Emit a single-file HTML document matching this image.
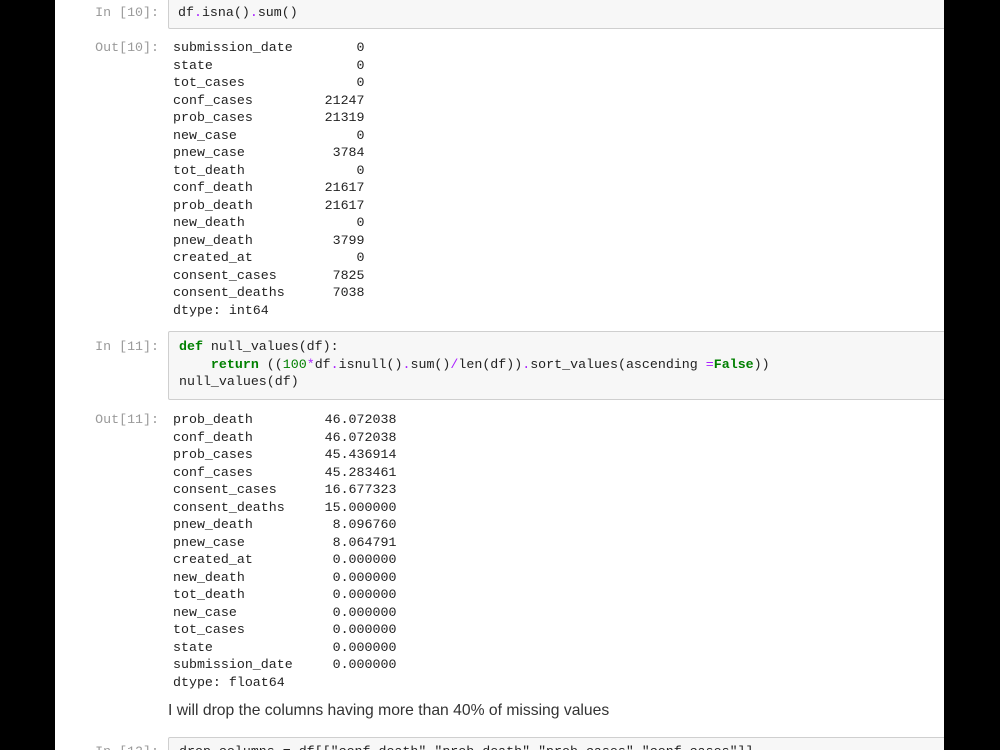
<!DOCTYPE html>
<html><head><meta charset="utf-8"><style>
html,body{margin:0;width:1000px;height:750px;overflow:hidden;}
body{background:#000;position:relative;font-family:"Liberation Mono",monospace;font-size:13.3px;}
.page{position:absolute;left:55px;top:0;width:889px;height:750px;background:#fff;overflow:hidden;}
.p{position:absolute;right:785px;color:#9a9a9a;white-space:pre;line-height:17.5px;}
.box{position:absolute;left:113px;width:790px;background:#f7f7f7;border:1px solid #cfcfcf;border-radius:2px;}
pre{margin:0;font:inherit;line-height:17.5px;color:#222;position:absolute;}
.k{color:#008000;font-weight:bold}.o{color:#aa22ff}.n{color:#008000}
</style></head><body><div class="page">
<div class="box" style="top:-4px;height:31px"></div>
<div class="p" style="top:4px">In [10]:</div>
<pre style="left:123px;top:4px">df<span class="o">.</span>isna()<span class="o">.</span>sum()</pre>
<div class="p" style="top:39px">Out[10]:</div>
<pre style="left:118px;top:39px">submission_date        0
state                  0
tot_cases              0
conf_cases         21247
prob_cases         21319
new_case               0
pnew_case           3784
tot_death              0
conf_death         21617
prob_death         21617
new_death              0
pnew_death          3799
created_at             0
consent_cases       7825
consent_deaths      7038
dtype: int64</pre>
<div class="box" style="top:331px;height:67px"></div>
<div class="p" style="top:338px">In [11]:</div>
<pre style="left:124px;top:338px"><span class="k">def</span> null_values(df):
    <span class="k">return</span> ((<span class="n">100</span><span class="o">*</span>df<span class="o">.</span>isnull()<span class="o">.</span>sum()<span class="o">/</span>len(df))<span class="o">.</span>sort_values(ascending <span class="o">=</span><span class="k">False</span>))
null_values(df)</pre>
<div class="p" style="top:411px">Out[11]:</div>
<pre style="left:118px;top:411px">prob_death         46.072038
conf_death         46.072038
prob_cases         45.436914
conf_cases         45.283461
consent_cases      16.677323
consent_deaths     15.000000
pnew_death          8.096760
pnew_case           8.064791
created_at          0.000000
new_death           0.000000
tot_death           0.000000
new_case            0.000000
tot_cases           0.000000
state               0.000000
submission_date     0.000000
dtype: float64</pre>
<div style="position:absolute;left:113px;top:702px;font-family:'Liberation Sans',sans-serif;font-size:15.7px;color:#333;">I will drop the columns having more than 40% of missing values</div>
<div class="box" style="top:737px;height:30px"></div>
<div class="p" style="top:743px">In [12]:</div>
<pre style="left:124px;top:743px">drop_columns = df[["conf_death","prob_death","prob_cases","conf_cases"]]</pre>
</div></body></html>
